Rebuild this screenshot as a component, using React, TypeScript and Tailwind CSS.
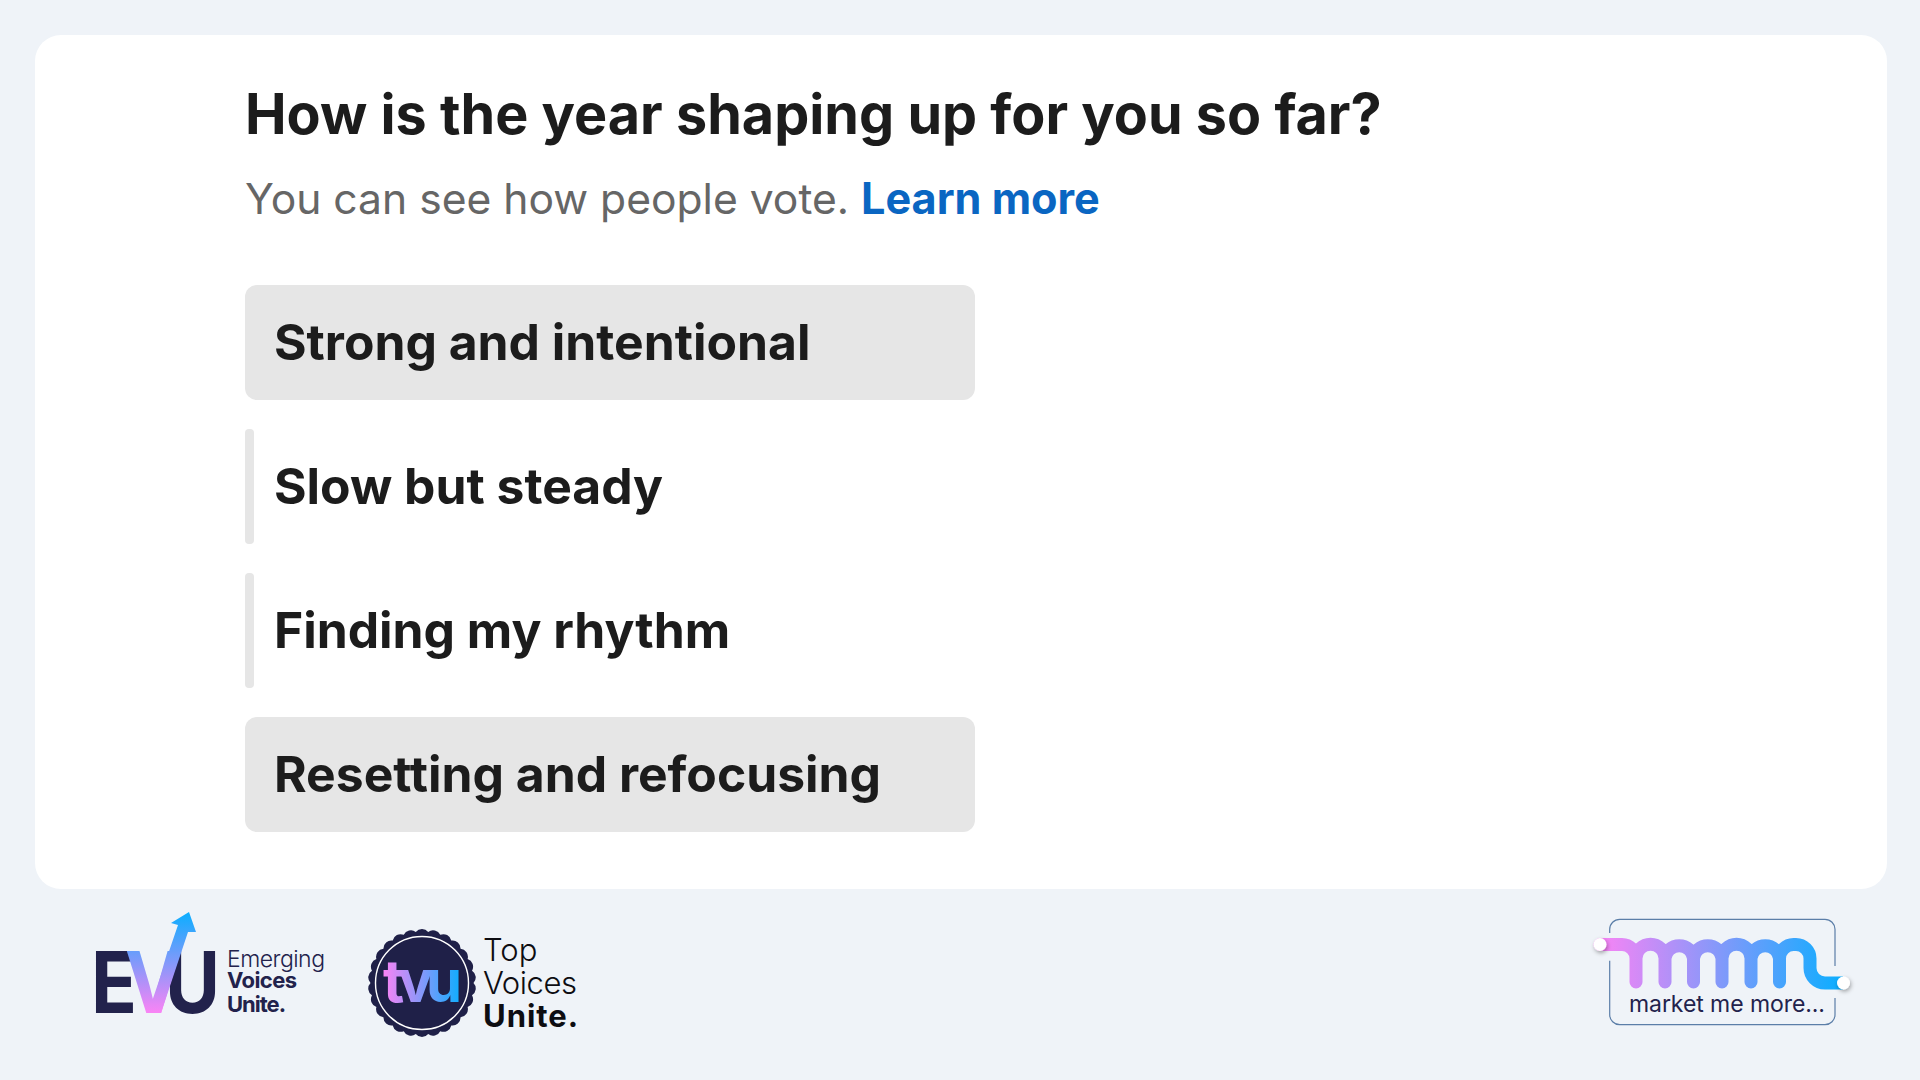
const font = "Inter, 'Noto Sans', sans-serif";

const options = [
  { label: "Strong and intentional", full: true },
  { label: "Slow but steady", full: false },
  { label: "Finding my rhythm", full: false },
  { label: "Resetting and refocusing", full: true },
];

const PollOption = ({ label, full }: { label: string; full: boolean }) => (
  <div className="relative flex h-[115px] w-[730px] items-center rounded-[12px] pl-[29px]">
    <div
      className={
        full
          ? "absolute inset-y-0 left-0 w-full rounded-[12px] bg-[#e6e6e6]"
          : "absolute inset-y-0 left-0 w-[9px] rounded-[4px] bg-[#e6e6e6]"
      }
    />
    <span className="relative text-[49.8px] font-bold text-[#1c1c1c]">{label}</span>
  </div>
);

const EvuLogo = () => (
  <svg width="300" height="150" viewBox="0 0 300 150" className="shrink-0">
    <defs>
      <linearGradient id="evuGrad" gradientUnits="userSpaceOnUse" x1="0" y1="122" x2="0" y2="22">
        <stop offset="0" stopColor="#f884f5" />
        <stop offset="1" stopColor="#0aaeff" />
      </linearGradient>
    </defs>
    <text x="31" y="123" fontSize="85" fontWeight="700" fill="#22224c" fontFamily={font} textLength="46" lengthAdjust="spacingAndGlyphs">E</text>
    <text x="105" y="123" fontSize="85" fontWeight="700" fill="#22224c" fontFamily={font} textLength="55" lengthAdjust="spacingAndGlyphs">U</text>
    <text x="65" y="123" fontSize="85" fontWeight="700" fill="url(#evuGrad)" fontFamily={font} textLength="57" lengthAdjust="spacingAndGlyphs">V</text>
    <polygon points="101,123 128,42 136,42 129,22 111,33 118,35 88,123" fill="url(#evuGrad)" />
    <text x="167" y="77" fontSize="23" fontWeight="300" fill="#22224c" fontFamily={font} textLength="98">Emerging</text>
    <text x="167" y="98" fontSize="22" fontWeight="700" fill="#22224c" fontFamily={font} textLength="70">Voices</text>
    <text x="167" y="122" fontSize="22" fontWeight="700" fill="#22224c" fontFamily={font} textLength="59">Unite.</text>
  </svg>
);

// scalloped edge of the tvu seal
const sealPath = () => {
  const bumps = 26;
  const cx = 72;
  const cy = 73;
  let d = "";
  for (let i = 0; i < bumps; i++) {
    const a = (i / bumps) * Math.PI * 2;
    const x = cx + 51.5 * Math.cos(a);
    const y = cy + 51.5 * Math.sin(a);
    const b = ((i + 1) / bumps) * Math.PI * 2;
    const x2 = cx + 51.5 * Math.cos(b);
    const y2 = cy + 51.5 * Math.sin(b);
    d += `${i === 0 ? `M${x.toFixed(2)} ${y.toFixed(2)}` : ""}A8 8 0 0 1 ${x2.toFixed(2)} ${y2.toFixed(2)}`;
  }
  return d + "Z";
};

const TvuLogo = () => (
  <svg width="260" height="130" viewBox="0 0 260 130" className="shrink-0">
    <defs>
      <linearGradient id="tvuGrad" gradientUnits="userSpaceOnUse" x1="34" y1="0" x2="112" y2="0">
        <stop offset="0" stopColor="#f884f5" />
        <stop offset="1" stopColor="#0aaeff" />
      </linearGradient>
    </defs>
    <path d={sealPath()} fill="#1f2048" />
    <circle cx="72" cy="73" r="46.5" fill="none" stroke="#ffffff" strokeWidth="1.4" />
    <text x="33" y="92" fontSize="58" fontWeight="700" fill="url(#tvuGrad)" fontFamily={font} textLength="79">tvu</text>
    <text x="133" y="51" fontSize="31" fontWeight="300" fill="#0d0d12" fontFamily={font}>Top</text>
    <text x="133" y="84" fontSize="31" fontWeight="300" fill="#0d0d12" fontFamily={font} textLength="94">Voices</text>
    <text x="133" y="117" fontSize="31" fontWeight="700" fill="#0d0d12" fontFamily={font} textLength="95">Unite.</text>
  </svg>
);

const MmmLogo = () => (
  <svg width="290" height="140" viewBox="0 0 290 140" className="shrink-0">
    <defs>
      <linearGradient id="mmmGrad" gradientUnits="userSpaceOnUse" x1="30" y1="0" x2="273" y2="0">
        <stop offset="0" stopColor="#f884f5" />
        <stop offset="1" stopColor="#0aaeff" />
      </linearGradient>
      <filter id="dotShadow" x="-100%" y="-100%" width="300%" height="300%">
        <feDropShadow dx="1" dy="2" stdDeviation="2" floodColor="#000000" floodOpacity="0.35" />
      </filter>
    </defs>
    <path
      d="M39.7 33V29.3A10 10 0 0 1 49.7 19.3H255A10 10 0 0 1 265 29.3V66M265 98V114.7A10 10 0 0 1 255 124.7H49.7A10 10 0 0 1 39.7 114.7V60.7"
      fill="none"
      stroke="#5b7ea8"
      strokeWidth="1.2"
    />
    <path
      d="M30 44.5H52A14 14 0 0 1 66 58.5V82M66 58.5A14.3 14 0 0 1 95 58.5V82M95 58.5A14.3 14 0 0 1 123.5 58.5V82M123.5 58.5A14.3 14 0 0 1 152 58.5V82M152 58.5A14.3 14 0 0 1 181 58.5V82M181 58.5A14.3 14 0 0 1 209.5 58.5V82"
      fill="none"
      stroke="url(#mmmGrad)"
      strokeWidth="13"
      strokeLinecap="round"
    />
    <path
      d="M209.5 58.5A14 14 0 0 1 223.500 44.5H226A14 14 0 0 1 240 58.5V68A15 15 0 0 0 255 83H273"
      fill="none"
      stroke="url(#mmmGrad)"
      strokeWidth="13"
    />
    <circle cx="30" cy="44.5" r="6.5" fill="#ffffff" filter="url(#dotShadow)" />
    <circle cx="273.500" cy="83" r="6.5" fill="#ffffff" filter="url(#dotShadow)" />
    <text x="59" y="112" fontSize="23" fontWeight="400" fill="#22224c" fontFamily={font} textLength="196">market me more...</text>
  </svg>
);

export default function App() {
  return (
    <div className="flex h-[1080px] w-full flex-col overflow-hidden bg-[#eff3f8]" style={{ fontFamily: font }}>
      <div className="ml-[35px] mr-[33px] mt-[35px] h-[854px] rounded-[26px] bg-white pl-[210px]">
        <h1 className="pt-[45px] text-[55.7px] leading-[68px] font-bold text-[#1c1c1c]">
          How is the year shaping up for you so far?
        </h1>
        <p className="mt-[25px] text-[42.6px] leading-[50px] text-[#666666]">
          You can see how people vote. <span className="text-[43.2px] font-bold text-[#0a66c2]">Learn more</span>
        </p>
        <div className="mt-[61px] flex flex-col gap-[29px]">
          {options.map((o) => (
            <PollOption key={o.label} label={o.label} full={o.full} />
          ))}
        </div>
      </div>
      <div className="flex items-start pl-[60px] pt-[1px]">
        <EvuLogo />
        <div className="-ml-[10px] mt-[20px]">
          <TvuLogo />
        </div>
        <div className="ml-auto mr-[60px] mt-[10px]">
          <MmmLogo />
        </div>
      </div>
    </div>
  );
}
